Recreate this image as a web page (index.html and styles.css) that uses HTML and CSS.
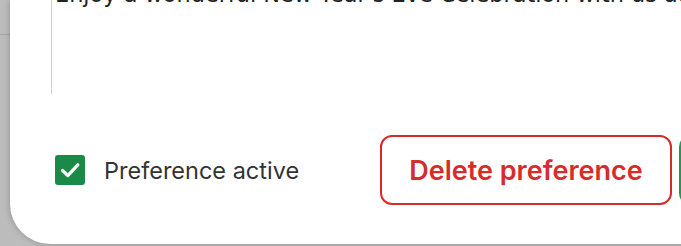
FILE: index.html
```html
<!DOCTYPE html>
<html lang="en">
<head>
<meta charset="utf-8">
<title>Preference</title>
<link rel="stylesheet" href="styles.css">
</head>
<body>
<div class="backdrop">
  <div class="backdrop-header"></div>
</div>
<div class="modal">
  <div class="message">Enjoy a wonderful New Year's Eve Celebration with us at the Grand Hall</div>
  <div class="footer">
    <label class="check">
      <span class="box">
        <svg viewBox="0 0 30 30" width="30" height="30" aria-hidden="true">
          <path d="M7.5 15.5 L12.8 20.6 L22.8 9.8" fill="none" stroke="#fff" stroke-width="3.2" stroke-linecap="round" stroke-linejoin="round"/>
        </svg>
      </span>
      <span class="check-label">Preference active</span>
    </label>
    <div class="actions">
      <button class="btn btn-delete">Delete preference</button>
      <button class="btn btn-save">Save preference</button>
    </div>
  </div>
</div>
</body>
</html>
```

FILE: styles.css
```css
html, body {
  margin: 0;
  padding: 0;
}
body {
  width: 681px;
  height: 246px;
  overflow: hidden;
  background: #bcbcbc;
  display: flex;
  align-items: flex-start;
}
.backdrop {
  width: 10px;
  flex: none;
}
.backdrop-header {
  height: 34px;
  border-bottom: 1px solid #a6a6a6;
}
.modal {
  flex: none;
  width: 900px;
  height: 244px;
  background: #fff;
  border-radius: 0 0 0 40px;
  box-shadow: 0 0 6px rgba(0, 0, 0, 0.25);
  padding-left: 41px;
  box-sizing: border-box;
  display: flex;
  flex-direction: column;
  overflow: hidden;
}
.message {
  flex: none;
  margin-top: -19px;
  height: 113px;
  border-left: 1px solid #d0d0d0;
  padding-left: 3px;
  font-family: "DejaVu Sans", sans-serif;
  font-size: 22.4px;
  color: #222;
  white-space: nowrap;
  box-sizing: border-box;
}
.footer {
  flex: none;
  display: flex;
  align-items: center;
  margin-top: 41px;
  padding-left: 4px;
  font-family: Inter, sans-serif;
}
.check {
  flex: none;
  display: flex;
  align-items: center;
  gap: 19px;
  width: 325px;
  white-space: nowrap;
}
.box {
  flex: none;
  width: 30px;
  height: 30px;
  border-radius: 3px;
  background: #198a48;
  display: flex;
}
.check-label {
  font-size: 23.5px;
  color: #333;
}
.actions {
  flex: none;
  display: flex;
  gap: 7px;
}
.btn {
  flex: none;
  height: 70px;
  border-radius: 12px;
  background: #fff;
  font-family: Inter, sans-serif;
  font-size: 27px;
  font-weight: 600;
  padding: 0 20px;
  box-sizing: border-box;
  white-space: nowrap;
}
.btn-delete {
  width: 292px;
  border: 2px solid #d62c2c;
  color: #d62c2c;
}
.btn-save {
  border: 2px solid #1f9a4f;
  color: #1f9a4f;
}
```
